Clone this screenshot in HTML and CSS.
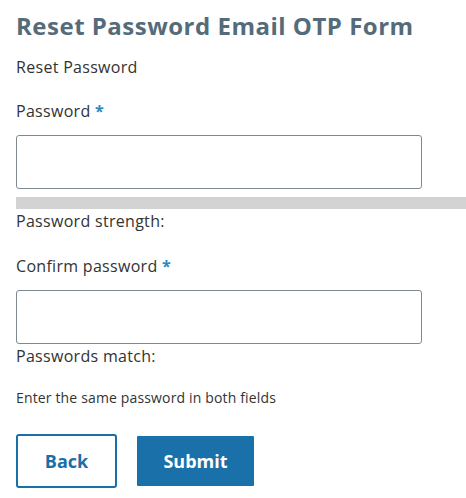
FILE: index.html
```html
<!DOCTYPE html>
<html lang="en">
<head>
<meta charset="utf-8">
<title>Reset Password Email OTP Form</title>
<link rel="stylesheet" href="styles.css">
</head>
<body>
<main class="page">
  <h1 class="title">Reset Password Email OTP Form</h1>
  <p class="subtitle">Reset Password</p>
  <form class="form">
    <div class="field">
      <label class="label" for="pw">Password <span class="req">*</span></label>
      <input class="input" id="pw" type="password">
      <div class="meter"></div>
      <div class="status">Password strength:</div>
    </div>
    <div class="field field-confirm">
      <label class="label" for="pw2">Confirm password <span class="req">*</span></label>
      <input class="input" id="pw2" type="password">
      <div class="status">Passwords match:</div>
    </div>
    <p class="hint">Enter the same password in both fields</p>
    <div class="actions">
      <button type="button" class="btn btn-back">Back</button>
      <button type="submit" class="btn btn-submit">Submit</button>
    </div>
  </form>
</main>
</body>
</html>
```
FILE: styles.css
```css
* { box-sizing: border-box; }
html, body { margin: 0; padding: 0; background: #fff; }
body {
  font-family: "Open Sans", "Liberation Sans", sans-serif;
  color: #333;
  overflow: hidden;
}
.page { padding: 11px 0 0 16px; }
.title {
  margin: 0;
  font-size: 24px;
  line-height: 30px;
  font-weight: 700;
  letter-spacing: 0.5px;
  color: #546b7a;
}
.subtitle {
  margin: 16px 0 0;
  font-size: 16px;
  line-height: 20px;
  letter-spacing: 0.3px;
}
.form { margin: 0; }
.field { margin-top: 24px; }
.label {
  display: block;
  font-size: 16px;
  line-height: 20px;
  letter-spacing: 0.3px;
}
.req { color: #2a8ac0; font-weight: 700; }
.input {
  display: block;
  width: 406px;
  height: 54px;
  margin-top: 14px;
  border: 1px solid #7e8a92;
  border-radius: 3px;
  background: #fff;
}
.meter {
  margin-top: 8px;
  height: 12px;
  width: 450px;
  background: #d3d3d3;
}
.status {
  font-size: 16px;
  line-height: 20px;
  letter-spacing: 0.3px;
  margin-top: 2px;
}
.field-confirm { margin-top: 25px; }
.hint {
  margin: 23px 0 0;
  font-size: 14px;
  line-height: 18px;
  letter-spacing: 0.15px;
}
.actions {
  display: flex;
  align-items: center;
  gap: 20px;
  margin-top: 27px;
}
.btn {
  font-family: inherit;
  font-weight: 700;
  font-size: 18px;
  cursor: pointer;
}
.btn-back {
  width: 101px;
  height: 54px;
  background: #fff;
  color: #1a6fa8;
  border: 2px solid #1a6fa8;
  border-radius: 3px;
}
.btn-submit {
  width: 117px;
  height: 50px;
  background: #1a70a9;
  color: #fff;
  border: none;
  border-radius: 1px;
}
```
